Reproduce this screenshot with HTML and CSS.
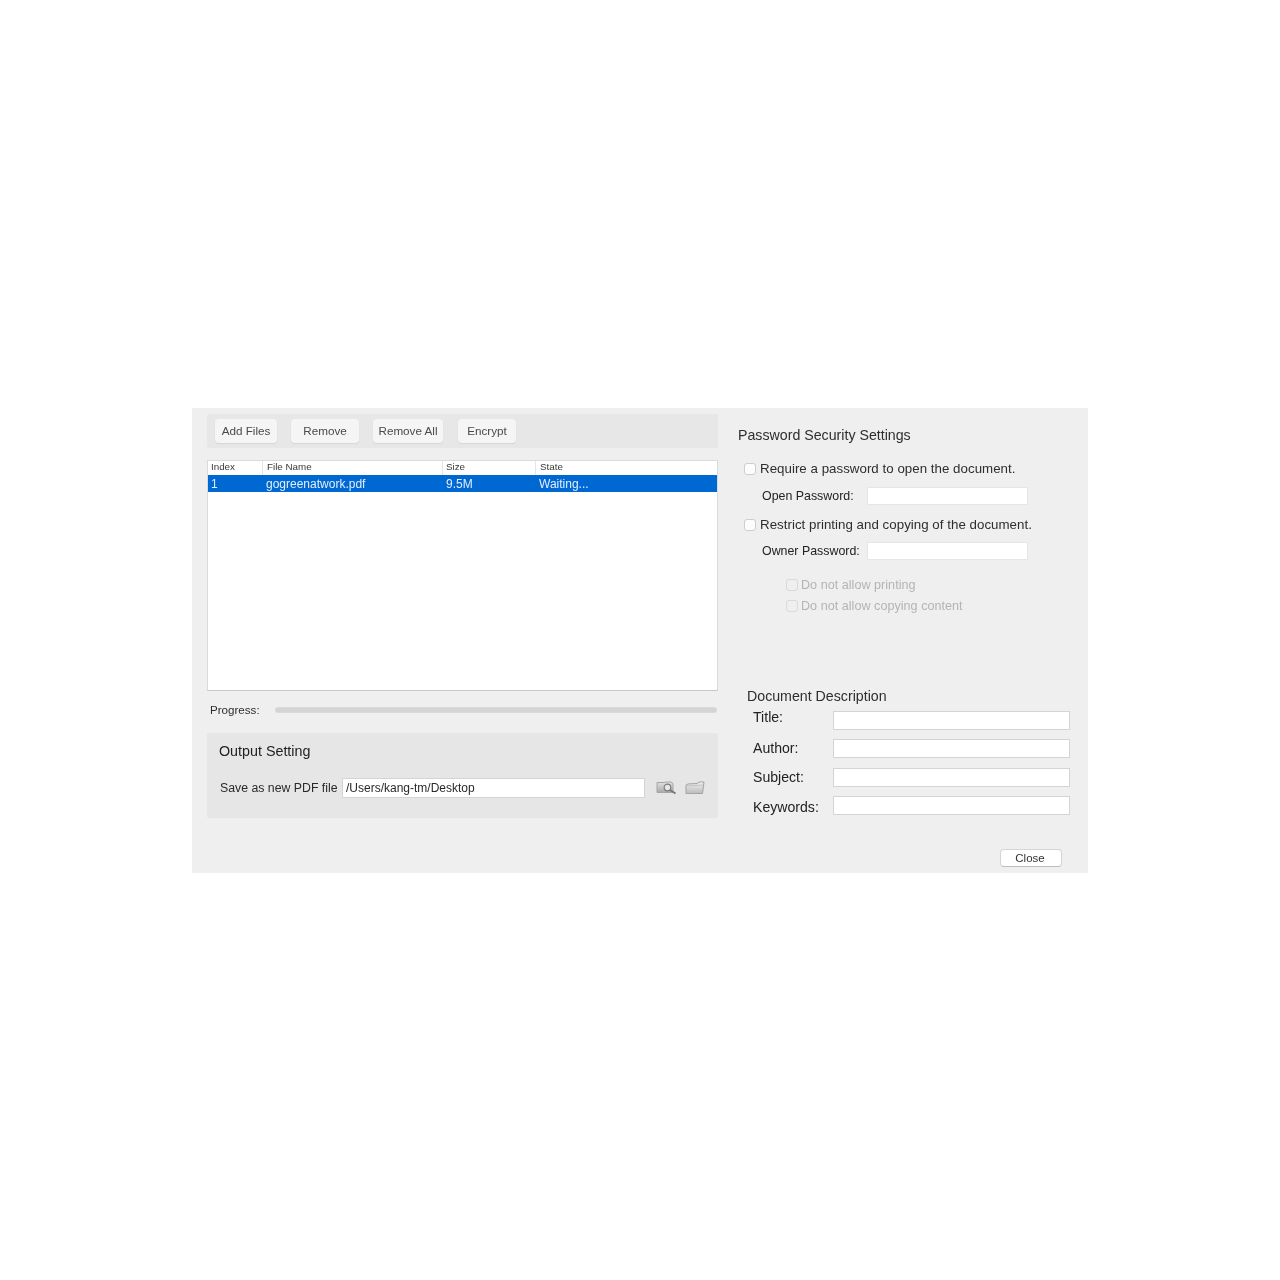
FILE: index.html
```html
<!DOCTYPE html>
<html lang="en">
<head>
<meta charset="utf-8">
<title>Encrypt PDF</title>
<link rel="stylesheet" href="styles.css">
</head>
<body>
<main class="window">
  <section class="left">
    <div class="toolbar">
      <button class="btn btn-add">Add Files</button>
      <button class="btn btn-remove">Remove</button>
      <button class="btn btn-removeall">Remove All</button>
      <button class="btn btn-encrypt">Encrypt</button>
    </div>
    <div class="table">
      <div class="thead">
        <span class="c1">Index</span><span class="c2">File Name</span><span class="c3">Size</span><span class="c4">State</span>
      </div>
      <div class="trow">
        <span class="c1">1</span><span class="c2">gogreenatwork.pdf</span><span class="c3">9.5M</span><span class="c4">Waiting...</span>
      </div>
    </div>
    <div class="progress">
      <span class="progress-label">Progress:</span>
      <div class="progress-bar"></div>
    </div>
    <div class="output">
      <h2 class="output-title">Output Setting</h2>
      <div class="output-row">
        <span class="output-label">Save as new PDF file</span>
        <div class="path">/Users/kang-tm/Desktop</div>
        <svg class="icon-browse" viewBox="0 0 22 14" width="22" height="14" aria-hidden="true">
          <defs>
            <linearGradient id="g1" x1="0" y1="0" x2="0" y2="1"><stop offset="0" stop-color="#e2e2e2"/><stop offset="1" stop-color="#a8a8a8"/></linearGradient>
          </defs>
          <path d="M1 1.5 L8 1.5 L9.5 1 L15 1 L17 2.5 L17 11.5 L1 11.5 Z" fill="url(#g1)" stroke="#a6a6a6" stroke-width="1"/>
          <circle cx="11.5" cy="6.5" r="3.3" fill="#e6e6e6" stroke="#7c7c7c" stroke-width="1.2"/>
          <path d="M14 9 L19.5 12.5" stroke="#757575" stroke-width="1.8" fill="none"/>
        </svg>
        <svg class="icon-folder" viewBox="0 0 20 14" width="20" height="14" aria-hidden="true">
          <defs>
            <linearGradient id="g2" x1="0" y1="0" x2="0" y2="1"><stop offset="0" stop-color="#f0f0f0"/><stop offset="1" stop-color="#bcbcbc"/></linearGradient>
          </defs>
          <path d="M1 4 L3 3 L12 2.5 L14 1 L19 1 L17.5 12.5 L1 12.5 Z" fill="url(#g2)" stroke="#a3a3a3" stroke-width="1" stroke-linejoin="round"/>
          <path d="M1.5 5 L17.8 4" stroke="#c4c4c4" stroke-width="1" fill="none"/>
        </svg>
      </div>
    </div>
  </section>
  <section class="right">
    <h2 class="sec-title">Password Security Settings</h2>
    <label class="check check-first"><span class="box"></span>Require a password to open the document.</label>
    <div class="pw-row pw-open"><span class="pw-label">Open Password:</span><div class="field"></div></div>
    <label class="check check-second"><span class="box"></span>Restrict printing and copying of the document.</label>
    <div class="pw-row pw-owner"><span class="pw-label">Owner Password:</span><div class="field"></div></div>
    <label class="check disabled dis-first"><span class="box"></span>Do not allow printing</label>
    <label class="check disabled dis-second"><span class="box"></span>Do not allow copying content</label>
    <h2 class="doc-title">Document Description</h2>
    <div class="desc">
      <div class="desc-row r-title"><span class="desc-label">Title:</span><div class="field field-wide"></div></div>
      <div class="desc-row r-author"><span class="desc-label">Author:</span><div class="field field-wide"></div></div>
      <div class="desc-row r-subject"><span class="desc-label">Subject:</span><div class="field field-wide"></div></div>
      <div class="desc-row r-keywords"><span class="desc-label">Keywords:</span><div class="field field-wide"></div></div>
    </div>
    <div class="footer"><button class="close">Close</button></div>
  </section>
</main>
</body>
</html>
```
FILE: styles.css
```css
* { box-sizing: border-box; }
html, body { margin: 0; padding: 0; background: #fff; }
body {
  height: 1280px;
  padding: 408px 192px 0;
  font-family: "Liberation Sans", Arial, sans-serif;
  color: #2a2a2a;
}
h2 { margin: 0; font-weight: 400; }
.window {
  width: 896px;
  height: 465px;
  background: #efefef;
  display: flex;
  filter: blur(0.5px);
}
.left {
  width: 526px;
  padding: 6px 0 0 15px;
  flex: none;
}
.toolbar {
  height: 34px;
  width: 511px;
  background: #e7e7e7;
  border-radius: 2px;
  display: flex;
  align-items: center;
  padding-left: 8px;
}
.btn {
  height: 24px;
  padding: 0 0 2px;
  border: 0;
  border-radius: 4px;
  background: #f5f5f5;
  box-shadow: 0 1px 1px #d6d6d6;
  font: 11.7px "Liberation Sans", Arial, sans-serif;
  color: #4a4a4a;
}
.btn-add { width: 62px; margin-right: 14px; }
.btn-remove { width: 68px; margin-right: 14px; }
.btn-removeall { width: 70px; margin-right: 15px; }
.btn-encrypt { width: 58px; }
.table {
  width: 511px;
  height: 231px;
  margin-top: 12px;
  background: #fff;
  border: 1px solid #dadada;
  border-bottom-color: #c8c8c8;
}
.thead, .trow { display: flex; }
.thead {
  height: 14px;
  font-size: 9.8px;
  line-height: 12px;
  color: #3a3a3a;
  background: #fff;
}
.thead span { box-shadow: -1px 0 0 #e6e6e6; }
.thead .c1 { box-shadow: none; }
.thead .c2, .thead .c4 { padding-left: 4px; }
.trow {
  height: 17px;
  font-size: 12px;
  line-height: 18px;
  color: #e4eefb;
  background: #0068d2;
}
.c1 { width: 55px; padding-left: 3px; }
.c2 { width: 180px; padding-left: 3px; }
.c3 { width: 93px; padding-left: 3px; }
.c4 { flex: 1; padding-left: 3px; }
.progress {
  display: flex;
  align-items: center;
  height: 14px;
  margin-top: 11px;
  padding-left: 3px;
}
.progress-label { width: 65px; font-size: 11.6px; color: #2e2e2e; }
.progress-bar {
  width: 442px;
  height: 6px;
  margin-top: 2px;
  border-radius: 3px;
  background: #d4d4d4;
  border: 1px solid #dadada;
}
.output {
  width: 511px;
  height: 85px;
  margin-top: 17px;
  background: #e6e6e6;
  border-radius: 2px;
  padding: 10px 0 0 12px;
}
.output-title { font-size: 14.3px; line-height: 16px; color: #222; }
.output-row {
  display: flex;
  align-items: center;
  height: 20px;
  margin-top: 19px;
  padding-left: 1px;
}
.output-label { width: 122px; font-size: 12.3px; color: #2a2a2a; }
.path {
  width: 303px;
  height: 20px;
  background: #fff;
  border: 1px solid #d4d4d4;
  font-size: 12px;
  line-height: 18px;
  padding-left: 3px;
  color: #2a2a2a;
}
.icon-browse { margin-left: 11px; }
.icon-folder { margin-left: 7px; }
.right {
  flex: 1;
  padding: 19px 0 0 20px;
  font-size: 13px;
  color: #2e2e2e;
}
.sec-title, .doc-title { font-size: 14.2px; line-height: 16px; color: #2e2e2e; }
.check { display: flex; align-items: center; height: 14px; line-height: 14px; font-size: 13.3px; letter-spacing: 0.03px; }
.box {
  width: 12px;
  height: 12px;
  flex: none;
  margin-right: 4px;
  background: #fdfdfd;
  border: 1px solid #cdcdcd;
  border-radius: 3px;
}
.check-first { margin: 19px 0 0 6px; }
.check-second { margin: 13px 0 0 6px; }
.pw-row { display: flex; align-items: center; height: 18px; margin-left: 24px; font-size: 12.4px; }
.pw-open { margin-top: 11px; }
.pw-owner { margin-top: 10px; }
.pw-owner .pw-label { padding-bottom: 1px; }
.pw-label { width: 105px; color: #222; }
.field {
  width: 161px;
  height: 18px;
  background: #fff;
  border: 1px solid #e6e6e6;
}
.disabled { color: #b4b4b4; font-size: 12.6px; letter-spacing: 0.02px; margin-left: 48px; }
.disabled .box { background: #efefef; border-color: #d9d9d9; margin-right: 3px; }
.dis-first { margin-top: 18px; }
.dis-second { margin-top: 7px; }
.doc-title { margin: 75px 0 0 9px; }
.desc { margin-left: 15px; font-size: 14.1px; }
.desc-row { display: flex; height: 19px; }
.desc-label { width: 80px; line-height: 13px; color: #222; }
.field-wide { width: 237px; height: 19px; border: 1px solid #d4d4d4; }
.r-title { margin-top: 7px; }
.r-author { margin-top: 9px; }
.r-author .desc-label { line-height: 18px; }
.r-subject { margin-top: 10px; }
.r-subject .desc-label { line-height: 18px; }
.r-keywords { margin-top: 9px; }
.r-keywords .desc-label { line-height: 22px; }
.footer { margin-top: 34px; padding-left: 262px; display: flex; }
.close {
  width: 62px;
  height: 18px;
  padding: 0 2px 0 0;
  border: 1px solid #d4d4d4;
  border-bottom-color: #bdbdbd;
  border-radius: 4px;
  background: #fff;
  font: 11.5px "Liberation Sans", Arial, sans-serif;
  color: #333;
}
```
